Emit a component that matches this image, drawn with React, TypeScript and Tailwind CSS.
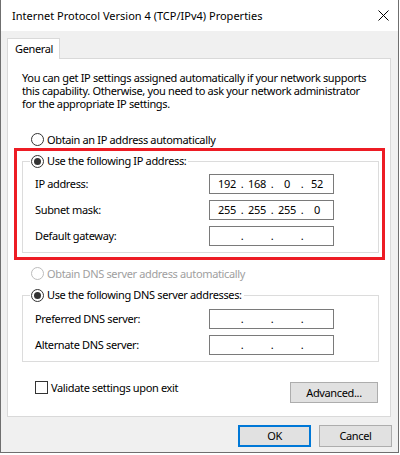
import React from "react";

// radio button like the win10 one
function Radio({ checked, disabled }: { checked?: boolean; disabled?: boolean }) {
  return (
    <span
      className={
        disabled
          ? "flex items-center justify-center w-[13px] h-[13px] rounded-full border border-[#bcbcbc] bg-white shrink-0"
          : "flex items-center justify-center w-[13px] h-[13px] rounded-full border border-[#333333] bg-white shrink-0"
      }
    >
      {checked && <span className="block w-[7px] h-[7px] rounded-full bg-[#333333]" />}
    </span>
  );
}

function IpBox({ parts }: { parts: string[] }) {
  return (
    <div className="flex items-center w-[125px] h-[20px] border border-[#7a7a7a] bg-white pl-[5px]">
      {parts.map((p, i) => (
        <React.Fragment key={i}>
          {i > 0 && <span className="w-[6px] text-center">.</span>}
          <span className="w-[24px] text-center">{p}</span>
        </React.Fragment>
      ))}
    </div>
  );
}

function Row({ label, parts }: { label: string; parts: string[] }) {
  return (
    <div className="flex items-center h-[20px] ml-[5px]">
      <span className="w-[174px]">{label}</span>
      <IpBox parts={parts} />
    </div>
  );
}

export default function App() {
  const empty = ["", "", "", ""];

  return (
    <div
      className="w-[400px] h-[455px] bg-white text-[11px] leading-[14px] tracking-[-0.35px] text-black"
      style={{ fontFamily: '"Noto Sans", "Liberation Sans", sans-serif' }}
    >
      <div className="flex flex-col w-[399px] h-[453px] border-l border-r border-b border-[#6f6f6f] bg-[#f0f0f0]">

        {/* TITLE BAR */}
        <div className="flex items-center justify-between h-[31px] bg-white pl-[11px] pr-[9px]">
          <span className="tracking-normal">Internet Protocol Version 4 (TCP/IPv4) Properties</span>
          <svg width="11" height="11" viewBox="0 0 11 11">
            <path d="M0.5 0.5 L10.5 10.5 M10.5 0.5 L0.5 10.5" stroke="#000" strokeWidth="1" fill="none" />
          </svg>
        </div>

        {/* BODY */}
        <div className="flex flex-col px-[6px] pt-[7px]">

          {/* TAB */}
          <div className="flex">
            <div className="relative z-10 flex items-center w-[53px] h-[21px] -mb-[1px] pl-[7px] bg-white border-t border-l border-r border-[#d9d9d9]">
              General
            </div>
          </div>

          {/* PANEL */}
          <div className="flex flex-col w-[384px] h-[359px] bg-white border border-[#d9d9d9]">

            <p className="ml-[14px] mt-[12px] whitespace-nowrap leading-[13px]">
              You can get IP settings assigned automatically if your network supports
              <br />
              this capability. Otherwise, you need to ask your network administrator
              <br />
              for the appropriate IP settings.
            </p>

            <div className="flex items-center gap-[3px] ml-[23px] mt-[23px] h-[13px]">
              <Radio />
              <span>Obtain an IP address automatically</span>
            </div>

            {/* red highlight */}
            <div className="ml-[6px] mt-[2px] w-[371px] border-[3px] border-[#ed1c24] pl-[5px] pr-[3px] pt-[3px] pb-[4px]">
              <fieldset className="border border-[#dcdcdc] pl-[7px] pb-[6px]">
                <legend className="pl-[1px] pr-[2px]">
                  <span className="flex items-center gap-[3px] h-[14px]">
                    <Radio checked />
                    <span>Use the following IP address:</span>
                  </span>
                </legend>
                <div className="flex flex-col gap-[6px] mt-[6px]">
                  <Row label="IP address:" parts={["192", "168", "0", "52"]} />
                  <Row label="Subnet mask:" parts={["255", "255", "255", "0"]} />
                  <Row label="Default gateway:" parts={empty} />
                </div>
              </fieldset>
            </div>

            <div className="flex items-center gap-[3px] ml-[23px] mt-[7px] h-[13px] text-[#a0a0a0]">
              <Radio disabled />
              <span>Obtain DNS server address automatically</span>
            </div>

            <fieldset className="ml-[14px] mt-[8px] w-[357px] border border-[#dcdcdc] pl-[7px] pb-[6px]">
              <legend className="pl-[1px] pr-[2px]">
                <span className="flex items-center gap-[3px] h-[14px]">
                  <Radio checked />
                  <span>Use the following DNS server addresses:</span>
                </span>
              </legend>
              <div className="flex flex-col gap-[6px] mt-[7px]">
                <Row label="Preferred DNS server:" parts={empty} />
                <Row label="Alternate DNS server:" parts={empty} />
              </div>
            </fieldset>

            <div className="flex items-start justify-between mt-[19px] ml-[27px] mr-[12px]">
              <div className="flex items-center gap-[3px] h-[13px]">
                <span className="block w-[13px] h-[13px] border border-[#333333] bg-white" />
                <span>Validate settings upon exit</span>
              </div>
              <button className="mt-[1px] w-[88px] h-[21px] bg-[#e1e1e1] border border-[#adadad]">
                Advanced...
              </button>
            </div>
          </div>

          {/* BUTTONS */}
          <div className="flex justify-end gap-[8px] mt-[8px]">
            <button className="w-[73px] h-[22px] bg-[#e1e1e1] border-2 border-[#0078d7]">
              OK
            </button>
            <button className="w-[73px] h-[22px] bg-[#e1e1e1] border border-[#adadad]">
              Cancel
            </button>
          </div>
        </div>
      </div>
    </div>
  );
}
